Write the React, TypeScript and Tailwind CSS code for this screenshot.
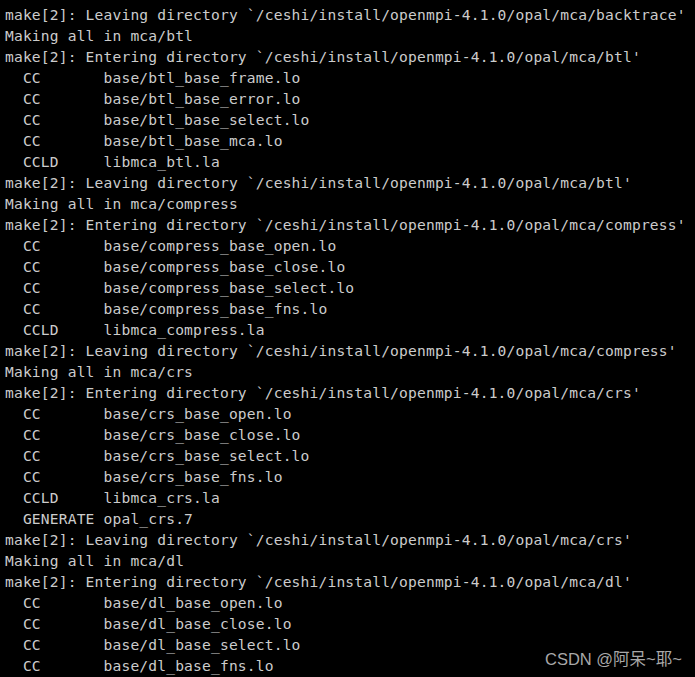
import React from "react";

const lines = [
  "make[2]: Leaving directory `/ceshi/install/openmpi-4.1.0/opal/mca/backtrace'",
  "Making all in mca/btl",
  "make[2]: Entering directory `/ceshi/install/openmpi-4.1.0/opal/mca/btl'",
  "  CC       base/btl_base_frame.lo",
  "  CC       base/btl_base_error.lo",
  "  CC       base/btl_base_select.lo",
  "  CC       base/btl_base_mca.lo",
  "  CCLD     libmca_btl.la",
  "make[2]: Leaving directory `/ceshi/install/openmpi-4.1.0/opal/mca/btl'",
  "Making all in mca/compress",
  "make[2]: Entering directory `/ceshi/install/openmpi-4.1.0/opal/mca/compress'",
  "  CC       base/compress_base_open.lo",
  "  CC       base/compress_base_close.lo",
  "  CC       base/compress_base_select.lo",
  "  CC       base/compress_base_fns.lo",
  "  CCLD     libmca_compress.la",
  "make[2]: Leaving directory `/ceshi/install/openmpi-4.1.0/opal/mca/compress'",
  "Making all in mca/crs",
  "make[2]: Entering directory `/ceshi/install/openmpi-4.1.0/opal/mca/crs'",
  "  CC       base/crs_base_open.lo",
  "  CC       base/crs_base_close.lo",
  "  CC       base/crs_base_select.lo",
  "  CC       base/crs_base_fns.lo",
  "  CCLD     libmca_crs.la",
  "  GENERATE opal_crs.7",
  "make[2]: Leaving directory `/ceshi/install/openmpi-4.1.0/opal/mca/crs'",
  "Making all in mca/dl",
  "make[2]: Entering directory `/ceshi/install/openmpi-4.1.0/opal/mca/dl'",
  "  CC       base/dl_base_open.lo",
  "  CC       base/dl_base_close.lo",
  "  CC       base/dl_base_select.lo",
  "  CC       base/dl_base_fns.lo",
];

export default function App() {
  return (
    <div className="relative w-[695px] h-[677px] bg-black overflow-hidden">
      <div
        className="pl-[5px] pt-[4px] text-[#cccccc] text-[14.6px] leading-[21px] tracking-[0.17px] whitespace-pre"
        style={{ fontFamily: '"DejaVu Sans Mono", monospace' }}
      >
        {lines.map((l, i) => (
          <div key={i} className="h-[21px]">{l}</div>
        ))}
      </div>
      <div
        className="absolute left-[545px] top-[648px] text-[16.5px] leading-[22px] text-[#a8a8a8] whitespace-nowrap"
        style={{ fontFamily: '"Liberation Sans", "Noto Sans CJK SC", sans-serif' }}
      >
        CSDN @阿呆~耶~
      </div>
    </div>
  );
}
